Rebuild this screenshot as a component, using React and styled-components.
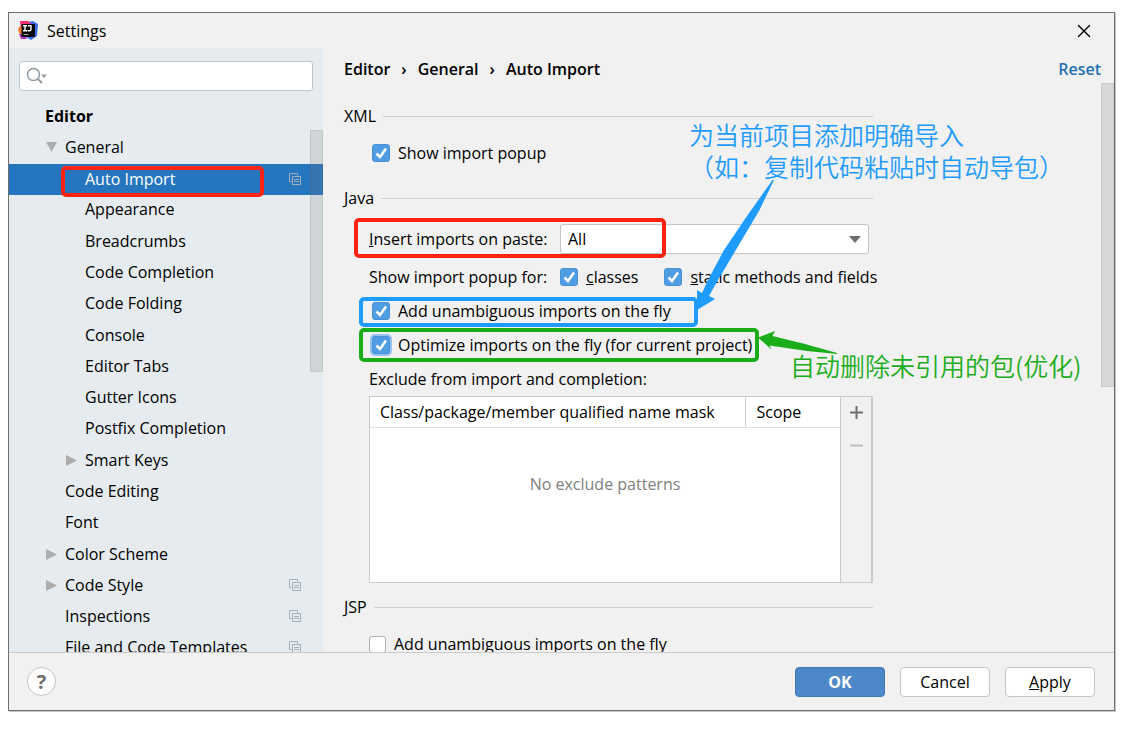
import { useState } from "react";
import styled, { createGlobalStyle } from "styled-components";
import { FiX } from "react-icons/fi";

const RED = "#ff2412";
const BLUE = "#1e9bff";
const GREEN = "#1aad19";

const GlobalStyle = createGlobalStyle`
    * {
        box-sizing: border-box;
    }

    body {
        margin: 0;
        background: #ffffff;
        color: #000000;
        font-family: "Open Sans", "Noto Sans CJK SC", sans-serif;
        font-size: 16px;
        line-height: 24px;
    }

    button, input, select {
        font: inherit;
        color: inherit;
    }
`

const Page = styled.div`
    height: 100vh;
    padding: 12px 14px 18px 8px;
`

const Dialog = styled.main`
    height: 100%;
    display: flex;
    flex-direction: column;
    border: 1px solid #6e6e6e;
    background: #f1f1f1;
    box-shadow: 1px 1px 0 #c4c4c4;
`

const TitleBar = styled.header`
    flex: none;
    height: 35px;
    padding: 0 19px 0 9px;
    display: flex;
    align-items: center;
    gap: 8px;
`

const Title = styled.h1`
    flex: 1;
    margin: 0;
    font-size: 16px;
    font-weight: 400;
`

const CloseButton = styled.button`
    display: flex;
    padding: 0;
    border: 0;
    background: none;
`

const Body = styled.div`
    flex: 1;
    min-height: 0;
    display: flex;
`

const Sidebar = styled.aside`
    position: relative;
    flex: none;
    width: 314px;
    overflow: hidden;
    background: #e5ebef;
`

const SearchBox = styled.label`
    height: 30px;
    margin: 13px 10px 10px;
    padding: 0 6px;
    display: flex;
    align-items: center;
    gap: 6px;
    border: 1px solid #c4c7c9;
    border-radius: 3px;
    background: #ffffff;

    input {
        flex: 1;
        min-width: 0;
        padding: 0;
        border: 0;
        outline: 0;
        background: none;
    }
`

const Tree = styled.ul`
    height: 563px;
    margin: 0;
    padding: 0;
    display: grid;
    grid-auto-rows: 1fr;
    list-style: none;
`

const TreeRow = styled.li`
    position: relative;
    display: flex;
    align-items: center;
    padding: 0 22px ${props => props.$selected ? 0 : 2}px ${props => 16 + props.$level * 20}px;
    background: ${props => props.$selected ? "#2675bf" : "none"};
    color: ${props => props.$selected ? "#ffffff" : "#000000"};
    font-weight: ${props => props.$level === 0 ? 700 : 400};
    white-space: nowrap;
`

const TreeLabel = styled.span`
    flex: 1;
`

const Twisty = styled.span`
    width: 20px;
    display: flex;
    padding-left: 1px;
`

const ScrollThumb = styled.div`
    position: absolute;
    top: ${props => props.$top}px;
    right: 0;
    width: 13px;
    height: ${props => props.$length}px;
    border: 1px solid rgba(0, 0, 0, 0.06);
    background: rgba(120, 120, 120, 0.2);
`

const Content = styled.section`
    position: relative;
    flex: 1;
    min-width: 0;
    overflow: hidden;
    padding-left: 21px;
`

const Crumbs = styled.nav`
    height: 42px;
    padding-right: 13px;
    display: flex;
    align-items: center;
    gap: 11px;
    font-weight: 600;

    a {
        margin-left: auto;
        color: #2470b3;
        text-decoration: none;
    }
`

const Form = styled.form`
    max-width: 529px;
    padding-top: 14px;
`

const Group = styled.fieldset`
    min-width: 0;
    margin: 0 0 ${props => props.$gap}px;
    padding: 0;
    border: 0;
`

const GroupTitle = styled.div`
    height: 24px;
    margin-bottom: 8px;
    display: flex;
    align-items: center;
    gap: 7px;

    &::after {
        content: "";
        flex: 1;
        height: 1px;
        background: #cfcfcf;
    }
`

const Row = styled.div`
    position: relative;
    height: ${props => props.$tall ? 42 : 34}px;
    padding-left: ${props => props.$indent}px;
    display: flex;
    align-items: center;
    white-space: nowrap;
`

const RowLabel = styled.label`
    flex: none;
    width: 191px;
`

const CheckLabel = styled.label`
    display: flex;
    align-items: center;
    gap: 8px;
    margin-right: 26px;
`

const CheckBox = styled.span`
    display: grid;

    > * {
        grid-area: 1 / 1;
        place-self: center;
    }

    input {
        appearance: none;
        width: ${props => props.$checked ? 18 : 17}px;
        height: ${props => props.$checked ? 18 : 17}px;
        margin: 0;
        border: 1px solid ${props => props.$checked ? "#4a90d6" : "#b0b0b0"};
        border-radius: 3px;
        background: ${props => props.$checked ? "#4f9de3" : "#ffffff"};
        box-shadow: ${props => props.$focused ? "0 0 0 2px #97c3f3" : "none"};
    }

    svg {
        pointer-events: none;
    }
`

const SelectBox = styled.span`
    flex: 1;
    margin-right: 4px;
    display: grid;
    align-items: center;

    > * {
        grid-area: 1 / 1;
    }

    select {
        appearance: none;
        width: 100%;
        height: 30px;
        padding: 0 7px;
        border: 1px solid #c4c4c4;
        border-radius: 3px;
        background: #ffffff;
    }

    svg {
        justify-self: end;
        margin-right: 8px;
        pointer-events: none;
    }
`

const PatternBox = styled.div`
    height: 187px;
    margin-left: 25px;
    display: flex;
    border: 1px solid #cbcbcb;
    border-right-width: 2px;
`

const PatternTable = styled.table`
    flex: 1;
    height: 100%;
    border-collapse: collapse;
    table-layout: fixed;
    background: #ffffff;

    th {
        height: 30px;
        padding: 0 10px;
        border-bottom: 1px solid #e0e0e0;
        font-weight: 400;
        text-align: left;
        white-space: nowrap;
    }

    th + th {
        width: 95px;
        padding-left: 11px;
        border-left: 1px solid #d4d4d4;
    }

    td {
        padding: 44px 0 0;
        color: #808080;
        text-align: center;
        vertical-align: top;
    }
`

const PatternTools = styled.div`
    width: 31px;
    padding: 9px 0;
    display: flex;
    flex-direction: column;
    align-items: center;
    gap: 20px;
    border-left: 1px solid #cbcbcb;
`

const ToolButton = styled.button`
    display: flex;
    padding: 0;
    border: 0;
    background: none;
    color: ${props => props.disabled ? "#bdbdbd" : "#6e6e6e"};
`

const Footer = styled.footer`
    flex: none;
    height: 58px;
    padding: 0 19px 0 18px;
    display: flex;
    align-items: center;
    gap: 15px;
    border-top: 1px solid #cbcbcb;
`

const HelpButton = styled.button`
    width: 29px;
    height: 29px;
    margin-right: auto;
    padding: 0;
    border: 1px solid #c4c4c4;
    border-radius: 50%;
    background: #ffffff;
    color: #6e6e6e;
    font-size: 20px;
    font-weight: 700;
    line-height: 24px;
`

const Button = styled.button`
    width: 90px;
    height: 30px;
    padding: 0;
    border: 1px solid ${props => props.$primary ? "#3d75b5" : "#c4c4c4"};
    border-radius: 4px;
    background: ${props => props.$primary ? "#4d89c9" : "#ffffff"};
    color: ${props => props.$primary ? "#ffffff" : "#000000"};
    font-weight: ${props => props.$primary ? 700 : 400};
`

const Marker = styled.div`
    position: absolute;
    top: ${props => props.$top}px;
    left: ${props => props.$left}px;
    width: ${props => props.$width}px;
    height: ${props => props.$height}px;
    border: 4px solid ${props => props.$color};
    border-radius: 5px;
    pointer-events: none;
`

const Note = styled.p`
    position: absolute;
    top: ${props => props.$top}px;
    left: ${props => props.$left}px;
    margin: 0;
    color: ${props => props.$color};
    font-family: "Noto Sans CJK SC", sans-serif;
    font-size: 25px;
    font-weight: 350;
    line-height: 32px;
    white-space: nowrap;
`

const Arrow = styled.svg`
    position: absolute;
    top: ${props => props.$top}px;
    left: ${props => props.$left}px;
    pointer-events: none;
`

const TREE = [
    { label: "Editor", level: 0 },
    { label: "General", level: 1, twisty: "open" },
    { label: "Auto Import", level: 2, selected: true, project: true },
    { label: "Appearance", level: 2 },
    { label: "Breadcrumbs", level: 2 },
    { label: "Code Completion", level: 2 },
    { label: "Code Folding", level: 2 },
    { label: "Console", level: 2 },
    { label: "Editor Tabs", level: 2 },
    { label: "Gutter Icons", level: 2 },
    { label: "Postfix Completion", level: 2 },
    { label: "Smart Keys", level: 2, twisty: "closed" },
    { label: "Code Editing", level: 1 },
    { label: "Font", level: 1 },
    { label: "Color Scheme", level: 1, twisty: "closed" },
    { label: "Code Style", level: 1, twisty: "closed", project: true },
    { label: "Inspections", level: 1, project: true },
    { label: "File and Code Templates", level: 1, project: true },
];

function Logo() {
    return (
        <svg width="21" height="21" viewBox="0 0 21 21" aria-hidden="true">
            <path d="M11 2 15 1 20 4 19 16 13 20 8 17Z" fill="#3b6fe8" />
            <path d="M10 1 15 4 17 10 11 12 5 7Z" fill="#8a3fd0" />
            <path d="M2 1 10 1 13 6 5 16 1 13 0 8 3 6Z" fill="#fb7a2a" />
            <path d="M2 1 10 1 12 6 3 8Z" fill="#fc2f6e" />
            <path d="M1 14 6 14 9 19 3 19Z" fill="#b42fc8" />
            <rect x="3.500" y="4" width="13.500" height="13" fill="#080808" />
            <path d="M5 5.700h4M7 5.700v5M5 10.700h4M10 5.700h3v3.500q0 1.500-1.500 1.500h-2" fill="none" stroke="#ffffff" strokeWidth="1.400" />
            <path d="M5.500 14.500h5" stroke="#b0b0b0" />
        </svg>
    );
}

function ProjectIcon() {
    return (
        <svg width="12" height="12" viewBox="0 0 12 12" fill="none" stroke="#a3b0b9" aria-hidden="true">
            <path d="M2.500 8.500h-2v-8h8v2" />
            <path d="M3.500 3.500h8v8h-8z" />
            <path d="M5 6.500h5M5 8.500h5" />
        </svg>
    );
}

function TwistyIcon({ state }) {
    return (
        <svg width="12" height="12" viewBox="0 0 12 12" fill="#adadad" aria-hidden="true">
            {state === "open" ? <path d="M0 1h11L5.500 11Z" /> : <path d="M0 1v11l11-5.500Z" />}
        </svg>
    );
}

function TreeItem({ item }) {
    const hasTwisty = Boolean(item.twisty);

    return (
        <TreeRow $level={item.level} $selected={item.selected}>
            <Twisty>{hasTwisty && <TwistyIcon state={item.twisty} />}</Twisty>
            <TreeLabel>{item.label}</TreeLabel>
            {item.project && <ProjectIcon />}
            {item.selected && <Marker $color={RED} $top={2} $left={52} $width={203} $height={31} />}
        </TreeRow>
    );
}

function Check({ children, initial = true, focused = false }) {

    const [checked, setChecked] = useState(initial);

    return (
        <CheckLabel>
            <CheckBox $checked={checked} $focused={focused}>
                <input type="checkbox" checked={checked} onChange={() => setChecked(!checked)} />
                {checked && (
                    <svg width="18" height="18" viewBox="0 0 18 18" fill="none" stroke="#ffffff" strokeWidth="2.500" aria-hidden="true">
                        <path d="M4.500 9.500 8 13 14 4.500" />
                    </svg>
                )}
            </CheckBox>
            <span>{children}</span>
        </CheckLabel>
    );
}

export default function App() {
    return (
        <Page>
            <GlobalStyle />
            <Dialog>
                <TitleBar>
                    <Logo />
                    <Title>Settings</Title>
                    <CloseButton aria-label="Close"><FiX size={22} strokeWidth={1.5} /></CloseButton>
                </TitleBar>
                <Body>
                    <Sidebar>
                        <SearchBox>
                            <svg width="22" height="18" viewBox="0 0 22 18" fill="none" stroke="#8f9aa1" strokeWidth="1.500" aria-hidden="true">
                                <circle cx="7.500" cy="7.500" r="6" />
                                <path d="m12 12 4 4" strokeWidth="2" />
                                <path d="M15 7.500h6L18 11Z" fill="#8f9aa1" stroke="none" />
                            </svg>
                            <input type="text" aria-label="Search settings" />
                        </SearchBox>
                        <Tree>
                            {TREE.map((item) => <TreeItem key={item.label} item={item} />)}
                        </Tree>
                        <ScrollThumb $top={82} $length={242} />
                    </Sidebar>
                    <Content>
                        <Crumbs aria-label="Breadcrumb">
                            <span>Editor</span>
                            <span>›</span>
                            <span>General</span>
                            <span>›</span>
                            <span>Auto Import</span>
                            <a href="#reset">Reset</a>
                        </Crumbs>
                        <Form>
                            <Group $gap={16} aria-label="XML">
                                <GroupTitle>XML</GroupTitle>
                                <Row $indent={28}>
                                    <Check>Show import popup</Check>
                                </Row>
                            </Group>
                            <Group $gap={12} aria-label="Java">
                                <GroupTitle>Java</GroupTitle>
                                <Row $tall $indent={25}>
                                    <RowLabel htmlFor="paste"><u>I</u>nsert imports on paste:</RowLabel>
                                    <SelectBox>
                                        <select id="paste" defaultValue="All">
                                            <option>All</option>
                                            <option>Ask</option>
                                            <option>None</option>
                                        </select>
                                        <svg width="12" height="7" viewBox="0 0 12 7" aria-hidden="true">
                                            <path d="M0 0h12L6 7Z" fill="#6e6e6e" />
                                        </svg>
                                    </SelectBox>
                                    <Marker $color={RED} $top={0} $left={10} $width={312} $height={40} />
                                </Row>
                                <Row $indent={25}>
                                    <RowLabel as="span">Show import popup for:</RowLabel>
                                    <Check><u>c</u>lasses</Check>
                                    <Check><u>s</u>tatic methods and fields</Check>
                                </Row>
                                <Row $indent={28}>
                                    <Check>Add unambiguous imports on the fly</Check>
                                    <Marker $color={BLUE} $top={3} $left={15} $width={339} $height={30} />
                                </Row>
                                <Row $indent={28}>
                                    <Check focused>Optimize imports on the fly (for current project)</Check>
                                    <Marker $color={GREEN} $top={0} $left={15} $width={400} $height={34} />
                                </Row>
                                <Row $indent={25}>Exclude from import and completion:</Row>
                                <PatternBox>
                                    <PatternTable>
                                        <thead>
                                            <tr>
                                                <th>Class/package/member qualified name mask</th>
                                                <th>Scope</th>
                                            </tr>
                                        </thead>
                                        <tbody>
                                            <tr>
                                                <td colSpan={2}>No exclude patterns</td>
                                            </tr>
                                        </tbody>
                                    </PatternTable>
                                    <PatternTools>
                                        <ToolButton type="button" aria-label="Add">
                                            <svg width="13" height="13" viewBox="0 0 13 13" stroke="currentColor" strokeWidth="2">
                                                <path d="M0 6.500h13M6.500 0v13" />
                                            </svg>
                                        </ToolButton>
                                        <ToolButton type="button" aria-label="Remove" disabled>
                                            <svg width="13" height="13" viewBox="0 0 13 13" stroke="currentColor" strokeWidth="2">
                                                <path d="M0 6.500h13" />
                                            </svg>
                                        </ToolButton>
                                    </PatternTools>
                                </PatternBox>
                            </Group>
                            <Group $gap={12} aria-label="JSP">
                                <GroupTitle>JSP</GroupTitle>
                                <Row $indent={25}>
                                    <Check initial={false}>Add unambiguous imports on the fly</Check>
                                </Row>
                            </Group>
                        </Form>
                        <ScrollThumb $top={35} $length={304} />
                        <Note $color={BLUE} $top={70} $left={366}>
                            为当前项目添加明确导入<br />（如：复制代码粘贴时自动导包）
                        </Note>
                        <Arrow $top={132} $left={374} width="80" height="132" viewBox="0 0 80 132">
                            <path d="M75.500 0 77 0 62 31 40 68 21 100 12 116 18 119 0 130 0 110 5 113 11 100 27 70 50 36Z" fill={BLUE} />
                        </Arrow>
                        <Note $color={GREEN} $top={301} $left={467}>自动删除未引用的包(优化)</Note>
                        <Arrow $top={283} $left={434} width="82" height="26" viewBox="0 0 82 26">
                            <path d="M1 6.500 18 0 15.500 5 48 13 80 22 80 23 50 20 12.500 14.500 14.500 18.500Z" fill={GREEN} />
                        </Arrow>
                    </Content>
                </Body>
                <Footer>
                    <HelpButton aria-label="Help">?</HelpButton>
                    <Button $primary>OK</Button>
                    <Button>Cancel</Button>
                    <Button><u>A</u>pply</Button>
                </Footer>
            </Dialog>
        </Page>
    );
}
